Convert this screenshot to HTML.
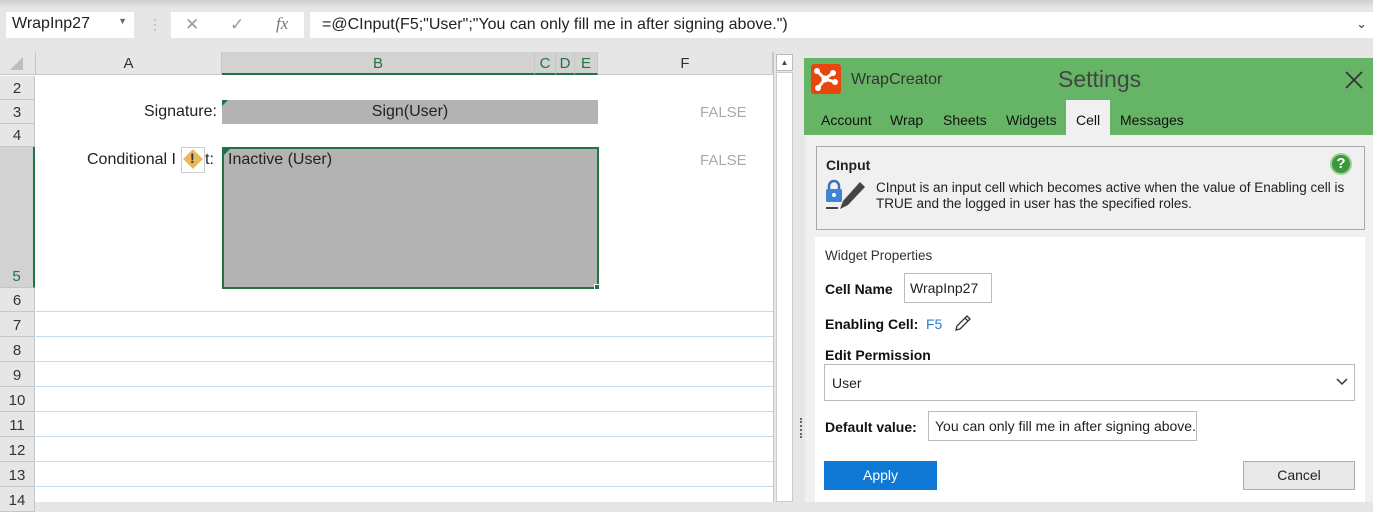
<!DOCTYPE html>
<html><head><style>
*{box-sizing:border-box;margin:0;padding:0}
body{width:1373px;height:502px;overflow:hidden;background:#e6e6e6;font-family:"Liberation Sans",sans-serif;position:relative;font-size:15px;color:#222}
.a{position:absolute}
.rh{position:absolute;left:0;width:35px;background:#e6e6e6;border-bottom:1px solid #c6c6c6;border-right:1px solid #c6c6c6;text-align:center;font-size:15px;color:#333;display:flex;align-items:flex-end;justify-content:center;padding-bottom:2px}
.gl{position:absolute;left:36px;width:737px;height:1px;background:#c5d9ef}
.ch{position:absolute;top:52px;height:23px;border-right:1px solid #c6c6c6;text-align:center;font-size:15px;line-height:23px;color:#333}
.tab{position:absolute;top:112px;font-size:14px;color:#111}
.lbl{position:absolute;font-size:14px;font-weight:bold;color:#111;left:825px}
</style></head><body>
<div class="a" style="left:0;top:0;width:1373px;height:8px;background:linear-gradient(#d0d0d0,#e6e6e6)"></div>
<div class="a" style="left:6px;top:12px;width:128px;height:26px;background:#fff;font-size:16px;padding:3px 6px">WrapInp27<span style="position:absolute;right:7px;top:4px;font-size:9px;color:#666">▼</span></div>
<div class="a" style="left:148px;top:16px;color:#aaa;font-size:14px">⋮</div>
<div class="a" style="left:171px;top:12px;width:133px;height:26px;background:#fff"></div>
<div class="a" style="left:185px;top:15px;color:#999;font-size:17px">✕</div>
<div class="a" style="left:230px;top:15px;color:#999;font-size:17px">✓</div>
<div class="a" style="left:276px;top:14px;color:#777;font-size:17px;font-style:italic;font-family:'Liberation Serif',serif">fx</div>
<div class="a" style="left:310px;top:12px;width:1063px;height:26px;background:#fff;font-size:16px;padding:4px 12px">=@CInput(F5;"User";"You can only fill me in after signing above.")<span style="position:absolute;right:6px;top:4px;font-size:13px;color:#444">⌄</span></div>
<div class="a" style="left:0;top:52px;width:773px;height:450px;background:#fff"></div>
<div class="a" style="left:0;top:52px;width:36px;height:23px;background:#e6e6e6;border-right:1px solid #c6c6c6;border-bottom:1px solid #c6c6c6"></div>
<div class="a" style="left:10px;top:57px;width:0;height:0;border-left:13px solid transparent;border-bottom:13px solid #bdbdbd"></div>
<div class="ch" style="left:36px;width:186px;background:#e6e6e6;border-bottom:1px solid #c6c6c6">A</div>
<div class="ch" style="left:222px;width:313px;background:#d2d2d2;color:#217346;border-bottom:2px solid #217346">B</div>
<div class="ch" style="left:535px;width:21px;background:#d2d2d2;color:#217346;border-bottom:2px solid #217346">C</div>
<div class="ch" style="left:556px;width:19px;background:#d2d2d2;color:#217346;border-bottom:2px solid #217346">D</div>
<div class="ch" style="left:575px;width:23px;background:#d2d2d2;color:#217346;border-bottom:2px solid #217346">E</div>
<div class="ch" style="left:598px;width:175px;background:#e6e6e6;border-bottom:1px solid #c6c6c6">F</div>
<div class="rh" style="top:76px;height:24px">2</div>
<div class="rh" style="top:100px;height:24px">3</div>
<div class="rh" style="top:124px;height:23px">4</div>
<div class="rh" style="top:147px;height:141px;background:#d2d2d2;color:#217346;border-right:2px solid #217346">5</div>
<div class="rh" style="top:288px;height:24px">6</div>
<div class="rh" style="top:312px;height:25px">7</div>
<div class="rh" style="top:337px;height:25px">8</div>
<div class="rh" style="top:362px;height:25px">9</div>
<div class="rh" style="top:387px;height:25px">10</div>
<div class="rh" style="top:412px;height:25px">11</div>
<div class="rh" style="top:437px;height:25px">12</div>
<div class="rh" style="top:462px;height:25px">13</div>
<div class="rh" style="top:487px;height:25px">14</div>
<div class="gl" style="top:311px"></div><div class="gl" style="top:336px"></div><div class="gl" style="top:361px"></div><div class="gl" style="top:386px"></div><div class="gl" style="top:411px"></div><div class="gl" style="top:436px"></div><div class="gl" style="top:461px"></div><div class="gl" style="top:486px"></div>
<div class="a" style="left:222px;top:100px;width:376px;height:24px;background:#b3b3b3;text-align:center;font-size:16px;line-height:24px">Sign(User)</div>
<div class="a" style="left:222px;top:100px;border-top:6px solid #217346;border-right:6px solid transparent"></div>
<div class="a" style="left:144px;top:103px;font-size:16px">Signature:</div>
<div class="a" style="left:700px;top:104px;font-size:15px;color:#aaa">FALSE</div>
<div class="a" style="left:222px;top:147px;width:377px;height:142px;background:#b3b3b3;border:2px solid #217346;font-size:16px;padding:2px 4px">Inactive (User)</div>
<div class="a" style="left:224px;top:149px;border-top:6px solid #217346;border-right:6px solid transparent"></div>
<div class="a" style="left:594px;top:284px;width:6px;height:6px;background:#217346;border:1px solid #fff"></div>
<div class="a" style="left:87px;top:151px;font-size:16px">Conditional I</div>
<div class="a" style="left:205px;top:151px;font-size:16px">t:</div>
<div class="a" style="left:181px;top:147px;width:24px;height:26px;background:#fff;border:1px solid #ccc"></div>
<div class="a" style="left:186px;top:152px;width:14px;height:14px;background:#e8b85a;transform:rotate(45deg)"></div>
<div class="a" style="left:190px;top:150px;font-size:14px;font-weight:bold;color:#333">!</div>
<div class="a" style="left:700px;top:152px;font-size:15px;color:#aaa">FALSE</div>
<div class="a" style="left:773px;top:52px;width:24px;height:450px;background:#e6e6e6;border-left:1px solid #c6c6c6"></div>
<div class="a" style="left:776px;top:54px;width:17px;height:17px;background:#fff;border:1px solid #bbb;font-size:8px;text-align:center;line-height:15px;color:#444">▲</div>
<div class="a" style="left:776px;top:72px;width:17px;height:430px;background:#fff;border:1px solid #ccc"></div>
<div class="a" style="left:800px;top:418px;width:3px;height:20px;border-left:2px dotted #666"></div>
<div class="a" style="left:805px;top:135px;width:568px;height:367px;background:#f0f0f0"></div>
<div class="a" style="left:804px;top:58px;width:569px;height:77px;background:#66b566"></div>
<svg class="a" style="left:811px;top:64px" width="30" height="30" viewBox="0 0 30 30"><rect width="30" height="30" rx="3" fill="#e8460e"/><g stroke="#fff" stroke-width="3" stroke-linecap="round" fill="none"><path d="M14 15 L6 7 M14 15 L22 9 M14 15 L7 24 M14 15 L24 18"/></g><g fill="#fff"><circle cx="6" cy="7" r="3"/><circle cx="22" cy="9" r="3"/><circle cx="7" cy="24" r="3"/><circle cx="24" cy="18" r="3"/><circle cx="14" cy="15" r="3.5"/></g></svg>
<div class="a" style="left:851px;top:71px;font-size:16px;color:#333">WrapCreator</div>
<div class="a" style="left:1058px;top:66px;font-size:23px;color:#444">Settings</div>
<svg class="a" style="left:1345px;top:71px" width="18" height="18"><path d="M1 1 L17 17 M17 1 L1 17" stroke="#333" stroke-width="1.8"/></svg>
<div class="a" style="left:1066px;top:100px;width:44px;height:35px;background:#f0f0f0"></div>
<div class="tab" style="left:821px">Account</div><div class="tab" style="left:890px">Wrap</div><div class="tab" style="left:943px">Sheets</div><div class="tab" style="left:1006px">Widgets</div><div class="tab" style="left:1076px">Cell</div><div class="tab" style="left:1120px">Messages</div>
<div class="a" style="left:816px;top:146px;width:549px;height:84px;border:1px solid #a8a8a8;background:#f0f0f0"></div>
<div class="a" style="left:826px;top:157px;font-size:14px;font-weight:bold;color:#222">CInput</div>
<div class="a" style="left:1330px;top:153px;width:22px;height:22px;border-radius:50%;background:#3a9a3a;border:2px solid #9dcf9d;color:#fff;font-weight:bold;font-size:15px;text-align:center;line-height:18px">?</div>
<svg class="a" style="left:824px;top:178px" width="44" height="34" viewBox="0 0 44 34"><path d="M5 12 V8 a5 5 0 0 1 10 0 V12" stroke="#3b6fb6" stroke-width="2.5" fill="none"/><rect x="2" y="11" width="16" height="13" rx="1.5" fill="#3d86d6"/><circle cx="10" cy="17" r="2" fill="#fff"/><rect x="2" y="29" width="12" height="2" fill="#444"/><path d="M16 31 L19 23 L36 4 L41 9 L24 27 Z" fill="#444"/></svg>
<div class="a" style="left:876px;top:180px;font-size:13.5px;line-height:16px;color:#222;width:480px">CInput is an input cell which becomes active when the value of Enabling cell is TRUE and the logged in user has the specified roles.</div>
<div class="a" style="left:815px;top:237px;width:550px;height:265px;background:#fff"></div>
<div class="a" style="left:825px;top:248px;font-size:13.5px;color:#333">Widget Properties</div>
<div class="lbl" style="top:281px">Cell Name</div>
<div class="a" style="left:904px;top:273px;width:88px;height:30px;border:1px solid #bbb;font-size:14px;padding:6px 5px">WrapInp27</div>
<div class="lbl" style="top:316px">Enabling Cell:</div>
<div class="a" style="left:926px;top:316px;font-size:14px;color:#2a7ad4">F5</div>
<svg class="a" style="left:953px;top:314px" width="20" height="18" viewBox="0 0 20 18"><path d="M3 16 L4 12 L14 2 L17 5 L7 15 Z M12 4 L15 7" stroke="#333" stroke-width="1.3" fill="none"/></svg>
<div class="lbl" style="top:347px">Edit Permission</div>
<div class="a" style="left:824px;top:364px;width:531px;height:37px;border:1px solid #bbb;font-size:14px;padding:10px 7px">User</div>
<svg class="a" style="left:1335px;top:377px" width="14" height="10"><path d="M2 2 L7 7 L12 2" stroke="#333" stroke-width="1.5" fill="none"/></svg>
<div class="lbl" style="top:419px">Default value:</div>
<div class="a" style="left:928px;top:411px;width:269px;height:30px;border:1px solid #bbb;font-size:14px;padding:6px 6px;white-space:nowrap;overflow:hidden">You can only fill me in after signing above.</div>
<div class="a" style="left:824px;top:461px;width:113px;height:29px;background:#0f78d4;color:#fff;font-size:14px;text-align:center;line-height:29px">Apply</div>
<div class="a" style="left:1243px;top:461px;width:112px;height:29px;background:#e9e9e9;border:1px solid #adadad;font-size:14px;text-align:center;line-height:27px">Cancel</div>
</body></html>
